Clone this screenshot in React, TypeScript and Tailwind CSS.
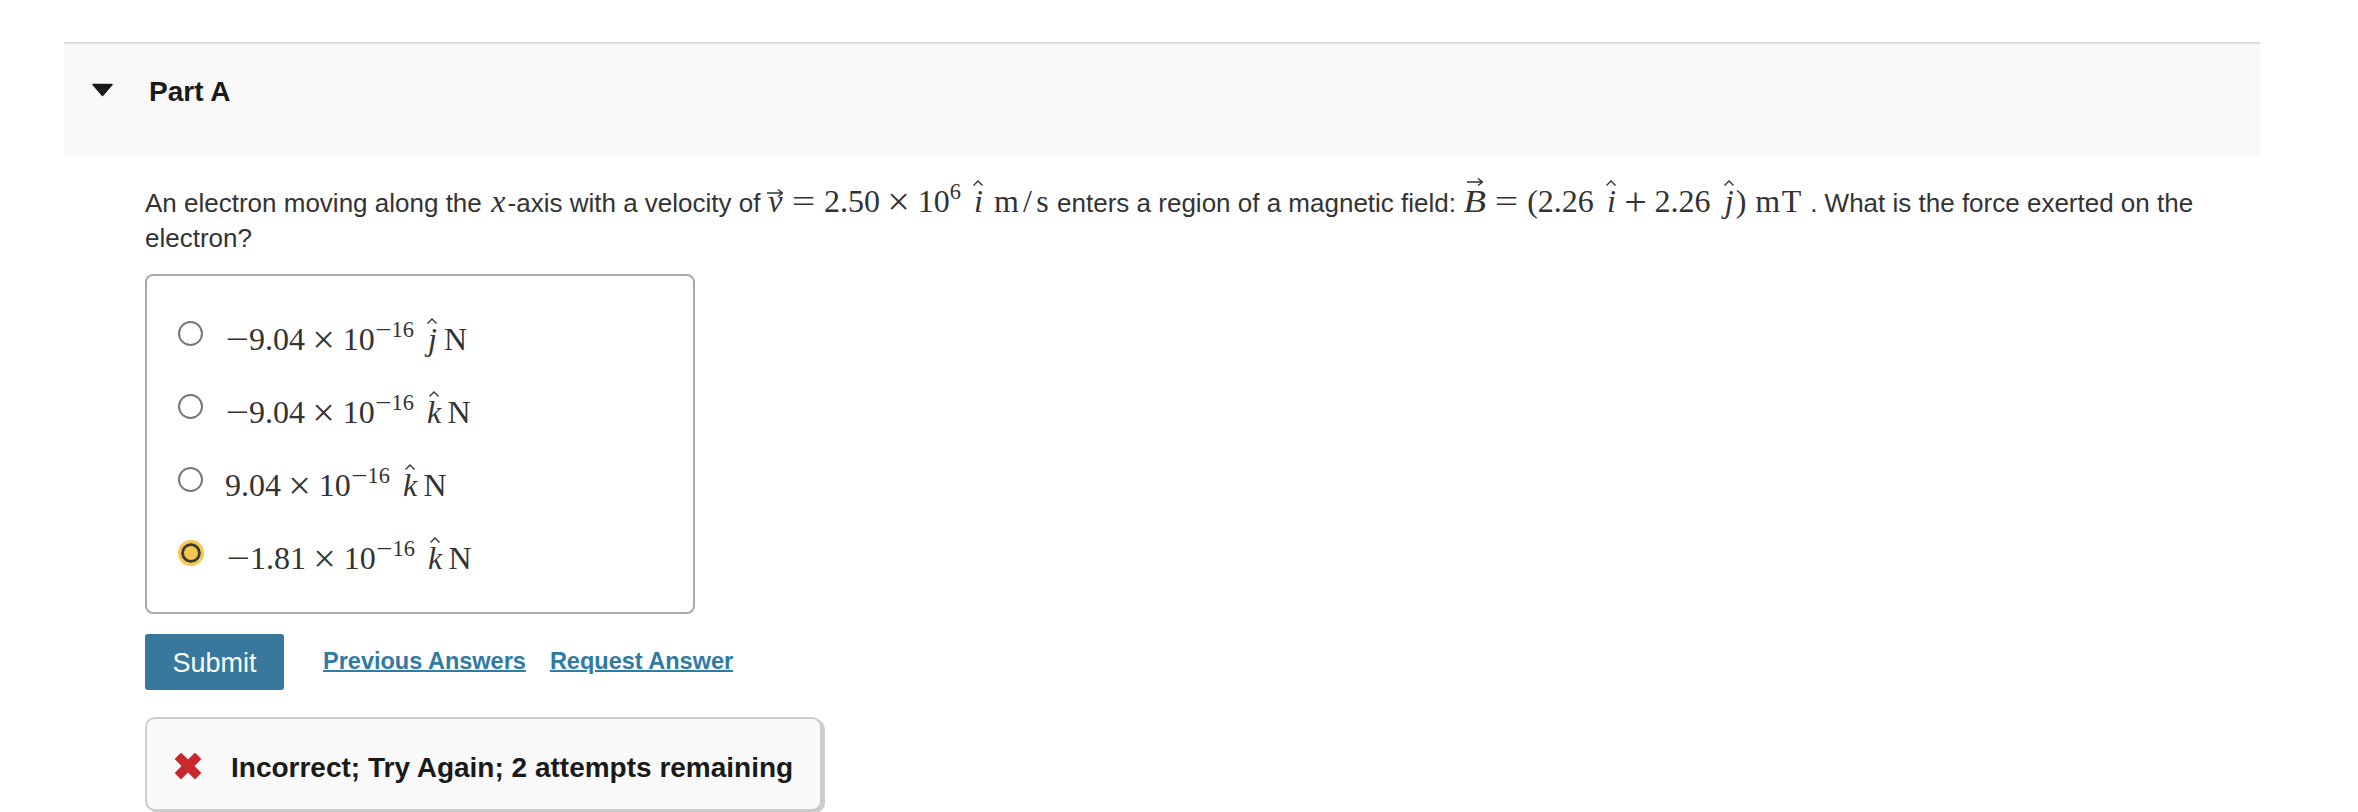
import type { ReactNode } from 'react';

const Hat = ({ children, width }: { children: ReactNode; width: string }) => (
  <span className={`relative inline-block italic text-center ${width}`}>
    {children}
    <svg className="absolute left-1/2 -translate-x-1/2 top-[-5px] w-[12px] h-[6px]" viewBox="0 0 12 6" fill="none" stroke="#333" strokeWidth="1.4">
      <path d="M1.5 5.5L6 1L10.5 5.5" />
    </svg>
  </span>
);

const Vec = ({ children, width, top }: { children: ReactNode; width: string; top: string }) => (
  <span className={`relative inline-block italic text-center ${width}`}>
    {children}
    <svg className={`absolute left-1/2 -translate-x-1/2 w-[16px] h-[8px] ${top}`} viewBox="0 0 16 8" fill="none" stroke="#333" strokeWidth="1.4">
      <path d="M0 4H15M11 .5L15.5 4L11 7.5" />
    </svg>
  </span>
);

// Math operators are wider in the reference's font than in Liberation Serif
const Minus = () => <span className="inline-block w-[0.75em] text-center scale-x-130">−</span>;
const Bin = ({ children }: { children: ReactNode }) => (
  <span className="inline-block w-[0.778em] mx-[0.2em] text-center scale-125">{children}</span>
);
const Rel = ({ children }: { children: ReactNode }) => (
  <span className="inline-block w-[0.778em] mx-[0.25em] text-center scale-x-130">{children}</span>
);

const Sup = ({ children }: { children: ReactNode }) => (
  <sup className="text-[22.4px] align-[13px] leading-none top-0">{children}</sup>
);

const M = ({ children }: { children: ReactNode }) => (
  <span className="font-['Liberation_Serif',serif] text-[32px] leading-none text-[#333]">{children}</span>
);

const Exp = ({ value, letter, width }: { value: string; letter: string; width: string }) => (
  <>
    {value.startsWith('-') ? <Minus /> : null}
    {value.replace('-', '')}
    <Bin>×</Bin>10
    <Sup><Minus />16</Sup>
    <span className="inline-block w-[12px]" />
    <Hat width={width}>{letter}</Hat>
    <span className="inline-block w-[5px]" />N
  </>
);

const Choice = ({ children, selected }: { children: ReactNode; selected?: boolean }) => (
  <label className="flex items-center h-[73px] gap-[22px]">
    {selected ? (
      <span className="w-[26px] h-[26px] rounded-full bg-[#f7c64f] border-[3px] border-[#f7c64f] shadow-[inset_0_0_0_3px_#3a3a3a] shrink-0 -mt-[6px] ml-[0.5px] mr-[0.5px]" />
    ) : (
      <span className="w-[25px] h-[25px] rounded-full bg-white border-2 border-[#777] shrink-0 -mt-[6px] ml-[1px]" />
    )}
    <span className="font-['Liberation_Serif',serif] text-[32px] leading-none text-[#333]">{children}</span>
  </label>
);

export default function App() {
  return (
    <div className="w-full h-[812px] overflow-hidden bg-white pt-[42px] pl-[64px] font-['Liberation_Sans',sans-serif] text-[#333]">
      <div className="w-[2196px]">
        {/* Part header */}
        <div className="h-[115px] border-t-2 border-[#ddd] bg-[#f9f9f9] flex items-start pt-[32px]">
          <svg className="ml-[28px] mt-[7px] w-[21px] h-[14px] shrink-0" viewBox="0 0 21 14">
            <path d="M1 1.5H20L10.5 12.5Z" fill="#1a1a1a" stroke="#1a1a1a" strokeWidth="1.5" strokeLinejoin="round" />
          </svg>
          <h2 className="ml-[36px] text-[28px] leading-[32px] font-bold text-[#1a1a1a]">Part A</h2>
        </div>

        <div className="pl-[81px]">
          {/* Question */}
          <p className="mt-[24px] w-[2060px] text-[26px] leading-[35px]">
            An electron moving along the <M><i className="inline-block w-[0.58em] text-center">x</i></M>-axis with a velocity of{' '}
            <M>
              <Vec width="w-[0.485em]" top="top-[4px]">v</Vec><Rel>=</Rel>2.50<Bin>×</Bin>10<Sup>6</Sup>
              <span className="inline-block w-[12px]" />
              <Hat width="w-[0.345em]">i</Hat>
              <span className="inline-block w-[10px]" />
              <span className="tracking-[0.04em]">m<span className="inline-block w-[0.5em] text-center">/</span>s</span>
            </M>{' '}
            enters a region of a magnetic field:{' '}
            <M>
              <Vec width="w-[0.72em]" top="top-[-7px]"><span className="inline-block scale-x-115">B</span></Vec><Rel>=</Rel>(2.26
              <span className="inline-block w-[12px]" />
              <Hat width="w-[0.345em]">i</Hat>
              <Bin>+</Bin>2.26
              <span className="inline-block w-[12px]" />
              <Hat width="w-[0.41em]">j</Hat>)
              <span className="inline-block w-[9px]" />
              <span className="tracking-[0.05em]">mT</span>
            </M>{' '}
            . What is the force exerted on the<br />
            electron?
          </p>

          {/* Answer choices */}
          <div className="mt-[18px] w-[550px] h-[340px] border-2 border-[#aaa] rounded-[8px] px-[30px] py-[24px]">
            <Choice><Exp value="-9.04" letter="j" width="w-[0.41em]" /></Choice>
            <Choice><Exp value="-9.04" letter="k" width="w-[0.52em]" /></Choice>
            <Choice><Exp value="9.04" letter="k" width="w-[0.52em]" /></Choice>
            <Choice selected><Exp value="-1.81" letter="k" width="w-[0.52em]" /></Choice>
          </div>

          {/* Actions */}
          <div className="mt-[20px] flex items-center">
            <button className="w-[139px] h-[56px] pt-[2px] bg-[#37789c] rounded-[3px] text-white text-[27px]">Submit</button>
            <a className="ml-[39px] text-[23.5px] font-bold text-[#2f7ba3] underline decoration-2">Previous Answers</a>
            <a className="ml-[24px] text-[23.5px] font-bold text-[#2f7ba3] underline decoration-2">Request Answer</a>
          </div>

          {/* Feedback */}
          <div className="mt-[27px] w-[677px] h-[94px] border-2 border-[#ccc] rounded-[10px] bg-[#f9f9f9] shadow-[3px_2px_0_#ccc] flex items-center pl-[27px]">
            <svg className="w-[28px] h-[28px] mt-[3px] shrink-0" viewBox="0 0 28 28" fill="#c9282d" stroke="#c9282d" strokeWidth="2" strokeLinejoin="round">
              <path d="M7 2L14 9L21 2L26 7L19 14L26 21L21 26L14 19L7 26L2 21L9 14L2 7Z" />
            </svg>
            <span className="ml-[29px] mt-[8px] text-[28px] font-bold text-[#1a1a1a]">Incorrect; Try Again; 2 attempts remaining</span>
          </div>
        </div>
      </div>
    </div>
  );
}
